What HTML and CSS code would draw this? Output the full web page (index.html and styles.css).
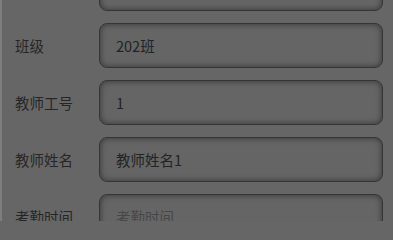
FILE: index.html
```html
<!DOCTYPE html>
<html lang="zh">
<head>
<meta charset="utf-8">
<link rel="stylesheet" href="styles.css">
</head>
<body>
<div class="page">
  <div class="form">
    <div class="row">
      <div class="label"></div>
      <div class="field"></div>
    </div>
    <div class="row">
      <div class="label">班级</div>
      <div class="field"><span class="value">202班</span></div>
    </div>
    <div class="row">
      <div class="label">教师工号</div>
      <div class="field"><span class="value">1</span></div>
    </div>
    <div class="row">
      <div class="label">教师姓名</div>
      <div class="field"><span class="value">教师姓名1</span></div>
    </div>
    <div class="row">
      <div class="label">考勤时间</div>
      <div class="field"><span class="placeholder">考勤时间</span></div>
    </div>
  </div>
</div>
</body>
</html>
```
FILE: styles.css
```css
html, body {
  margin: 0;
  padding: 0;
  height: 221px;
  overflow: hidden;
  background: #666666;
}
.page {
  height: 221px;
  overflow: hidden;
  border-left: 2px solid #7e7e7e;
  font-family: "Noto Sans CJK SC", "Noto Sans", sans-serif;
  font-size: 14.5px;
}
.form {
  display: flex;
  flex-direction: column;
  gap: 12px;
  margin-top: -34px;
  padding: 0 10px 0 13px;
}
.row {
  display: flex;
  align-items: center;
  height: 45px;
}
.label {
  width: 84px;
  flex: none;
  color: #262626;
  line-height: 20px;
}
.field {
  flex: 1;
  height: 45px;
  box-sizing: border-box;
  border: 1px solid #353535;
  border-radius: 8px;
  background: #656565;
  box-shadow: inset 0 0 6px rgba(0, 0, 0, 0.5);
  display: flex;
  align-items: center;
  padding-left: 16px;
}
.value {
  color: #232323;
  line-height: 20px;
}
.placeholder {
  color: #474747;
  line-height: 20px;
}
```
